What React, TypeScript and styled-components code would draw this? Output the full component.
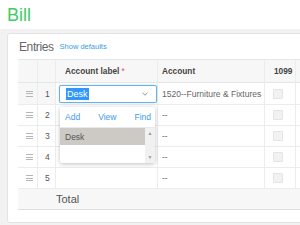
import styled, { createGlobalStyle } from "styled-components";

const GlobalStyle = createGlobalStyle`
  html, body {
    margin: 0;
    padding: 0;
    background: #f2f2f2;
    font-family: "Liberation Sans", Arial, sans-serif;
    overflow: hidden;
  }
`;

const PageHeader = styled.div`
  height: 29px;
  background: #ffffff;
  padding-left: 7px;
  display: flex;
  align-items: center;
  box-sizing: border-box;
`;

const PageTitle = styled.h1`
  margin: 0;
  font-size: 18px;
  font-weight: normal;
  color: #40cc62;
  line-height: 1;
`;

const Card = styled.div`
  margin: 4px -60px 0 7px;
  height: 190px;
  background: #ffffff;
  border: 1px solid #e3e3e3;
  border-radius: 3px;
  box-sizing: border-box;
  padding-left: 10px;
`;

const CardTitleRow = styled.div`
  height: 25px;
  display: flex;
  align-items: center;
  gap: 6px;
  padding-left: 1px;
`;

const CardTitle = styled.span`
  font-size: 12px;
  letter-spacing: -0.4px;
  color: #666;
`;

const LinkText = styled.a<{ size?: number }>`
  font-size: ${({ size }) => size ?? 7.5}px;
  color: #3d9be9;
  text-decoration: none;
  cursor: pointer;
`;

const Table = styled.div`
  display: grid;
  grid-template-columns: 20px 18px 102px 107px 31px 1fr;
`;

const HeadCell = styled.div`
  height: 24px;
  box-sizing: border-box;
  background: #f7f7f7;
  border-top: 1px solid #e6e6e6;
  border-bottom: 1px solid #e6e6e6;
  border-right: 1px solid #ececec;
  display: flex;
  align-items: center;
  font-size: 8.3px;
  font-weight: bold;
  color: #444;
`;

const HeadText = styled.span<{ indent: number }>`
  padding-left: ${({ indent }) => indent}px;
`;

const Required = styled.span`
  color: #e05555;
  margin-left: 2px;
  font-weight: normal;
`;

const Cell = styled.div<{ active?: boolean; tall?: boolean }>`
  position: relative;
  height: ${({ tall }) => (tall ? 22 : 21)}px;
  box-sizing: border-box;
  border-bottom: 1px solid #ececec;
  border-right: 1px solid #ececec;
  background: ${({ active }) => (active ? "#f7f7f7" : "#ffffff")};
  display: flex;
  align-items: center;
  font-size: 8.5px;
  color: #666;
`;

const NumberText = styled.span`
  padding-left: 7px;
  font-size: 8.5px;
  color: #555;
`;

const AccountText = styled.span`
  padding-left: 4px;
  white-space: nowrap;
`;

const Handle = styled.div`
  margin-left: 8px;
  width: 7px;
  display: flex;
  flex-direction: column;
  gap: 1.5px;
  & > i {
    display: block;
    height: 1px;
    background: #b5b5b5;
  }
`;

const CheckBox = styled.div`
  margin-left: 8px;
  width: 10px;
  height: 10px;
  border: 1px solid #e4e4e4;
  background: #f2f2f2;
  border-radius: 1px;
  box-sizing: border-box;
`;

const SelectBox = styled.div`
  margin-left: 3px;
  width: 98px;
  height: 18px;
  box-sizing: border-box;
  border: 1px solid #66b1ee;
  border-radius: 2px;
  box-shadow: 0 0 2px rgba(102, 175, 233, 0.5);
  display: flex;
  align-items: center;
  justify-content: space-between;
  padding: 0 8px 0 6px;
  background: #fff;
`;

const SelectedText = styled.span`
  background: #3297fd;
  color: #fff;
  font-size: 9px;
  line-height: 12px;
  padding: 0 1px;
`;

const DropDown = styled.div`
  position: absolute;
  left: 4px;
  top: 24px;
  width: 95px;
  height: 56px;
  background: #fff;
  border-radius: 2px;
  box-shadow: 0 1px 4px rgba(0, 0, 0, 0.25);
  z-index: 5;
  display: flex;
  flex-direction: column;
`;

const DropActions = styled.div`
  height: 20px;
  display: flex;
  align-items: center;
  justify-content: space-between;
  padding: 0 4px 0 5px;
  border-bottom: 1px solid #e8e8e8;
`;

const ListBox = styled.div`
  flex: 1;
  display: flex;
`;

const ListItems = styled.div`
  flex: 1;
`;

const ListItem = styled.div<{ selected?: boolean }>`
  height: 17px;
  display: flex;
  align-items: center;
  padding-left: 5px;
  font-size: 8.5px;
  color: #555;
  background: ${({ selected }) => (selected ? "#cdc9c4" : "transparent")};
`;

const ScrollBar = styled.div`
  width: 10px;
  background: #f1f1f1;
  display: flex;
  flex-direction: column;
  justify-content: space-between;
  align-items: center;
  padding: 3px 0;
  font-size: 5px;
  color: #999;
  line-height: 1;
`;

const TotalRow = styled.div`
  grid-column: 1 / -1;
  height: 21px;
  box-sizing: border-box;
  background: #f7f7f7;
  border-bottom: 1px solid #e0e0e0;
  display: flex;
  align-items: center;
  padding-left: 38px;
  font-size: 11px;
  color: #555;
`;

const Chevron = () => (
  <svg width="6" height="4" viewBox="0 0 6 4">
    <path d="M0.5 0.8 L3 3.2 L5.5 0.8" stroke="#888" strokeWidth="0.9" fill="none" />
  </svg>
);

const rows = [
  { n: 1, account: "1520--Furniture & Fixtures" },
  { n: 2, account: "--" },
  { n: 3, account: "--" },
  { n: 4, account: "--" },
  { n: 5, account: "--" },
];

export default function App() {
  return (
    <>
      <GlobalStyle />
      <PageHeader>
        <PageTitle>Bill</PageTitle>
      </PageHeader>
      <Card>
        <CardTitleRow>
          <CardTitle>Entries</CardTitle>
          <LinkText>Show defaults</LinkText>
        </CardTitleRow>
        <Table>
          <HeadCell />
          <HeadCell />
          <HeadCell>
            <HeadText indent={9}>
              Account label<Required>*</Required>
            </HeadText>
          </HeadCell>
          <HeadCell>
            <HeadText indent={4}>Account</HeadText>
          </HeadCell>
          <HeadCell>
            <HeadText indent={9}>1099</HeadText>
          </HeadCell>
          <HeadCell />

          {rows.map((row) => {
            const active = row.n === 1;
            return (
              <>
                <Cell key={`h${row.n}`} active={active} tall={active}>
                  <Handle>
                    <i />
                    <i />
                    <i />
                  </Handle>
                </Cell>
                <Cell key={`n${row.n}`} active={active} tall={active}>
                  <NumberText>{row.n}</NumberText>
                </Cell>
                <Cell key={`l${row.n}`} tall={active}>
                  {active && (
                    <>
                      <SelectBox>
                        <SelectedText>Desk</SelectedText>
                        <Chevron />
                      </SelectBox>
                      <DropDown>
                        <DropActions>
                          <LinkText size={8.5}>Add</LinkText>
                          <LinkText size={8.5}>View</LinkText>
                          <LinkText size={8.5}>Find</LinkText>
                        </DropActions>
                        <ListBox>
                          <ListItems>
                            <ListItem selected>Desk</ListItem>
                          </ListItems>
                          <ScrollBar>
                            <span>▲</span>
                            <span>▼</span>
                          </ScrollBar>
                        </ListBox>
                      </DropDown>
                    </>
                  )}
                </Cell>
                <Cell key={`a${row.n}`} tall={active}>
                  <AccountText>{row.account}</AccountText>
                </Cell>
                <Cell key={`c${row.n}`} tall={active}>
                  <CheckBox />
                </Cell>
                <Cell key={`e${row.n}`} tall={active} />
              </>
            );
          })}
          <TotalRow>Total</TotalRow>
        </Table>
      </Card>
    </>
  );
}
